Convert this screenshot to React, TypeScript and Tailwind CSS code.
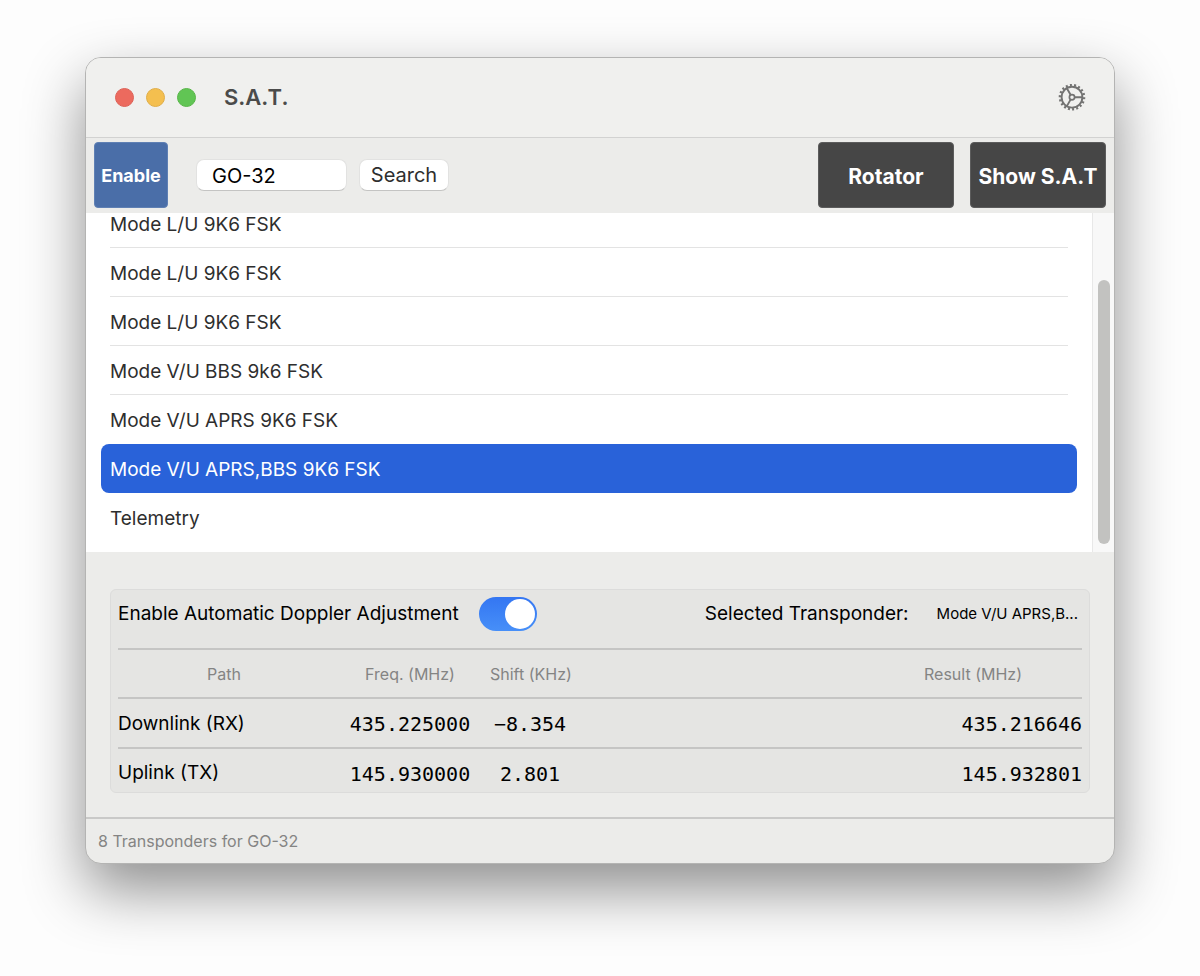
import { useState } from "react";

const transponders = [
  "Mode L/U 9K6 FSK",
  "Mode L/U 9K6 FSK",
  "Mode L/U 9K6 FSK",
  "Mode V/U BBS 9k6 FSK",
  "Mode V/U APRS 9K6 FSK",
  "Mode V/U APRS,BBS 9K6 FSK",
  "Telemetry",
];

const paths = [
  { name: "Downlink (RX)", freq: "435.225000", shift: "−8.354", result: "435.216646" },
  { name: "Uplink (TX)", freq: "145.930000", shift: "2.801", result: "145.932801" },
];

function GearIcon() {
  return (
    <svg viewBox="0 0 28 28" className="h-7 w-7" fill="none" stroke="#737372">
      <circle cx="14" cy="13.2" r="10.4" strokeWidth="1.9" />
      <circle cx="14" cy="13.2" r="12.1" strokeWidth="2.4" pathLength="72" strokeDasharray="1.9 2.1" />
      <circle cx="14" cy="13.2" r="2.6" strokeWidth="1.7" />
      <path d="M16.6 13.2H24M12.7 11L9 4.5M12.7 15.4L9 21.9" strokeWidth="1.9" />
    </svg>
  );
}

function TitleBar() {
  return (
    <header className="flex h-20 items-center border-b border-[#d2d2d1] bg-[#f0f0ee] pr-7 pl-[29px]">
      <div className="flex gap-3">
        <button aria-label="Close" className="h-[19px] w-[19px] rounded-full border border-[#dd6257] bg-[#ec6a5e]" />
        <button aria-label="Minimize" className="h-[19px] w-[19px] rounded-full border border-[#e0ae48] bg-[#f4bf4f]" />
        <button aria-label="Zoom" className="h-[19px] w-[19px] rounded-full border border-[#58b648] bg-[#61c554]" />
      </div>
      <h1 className="ml-7 flex-1 text-[22px] font-semibold text-[#4b4b4a]">S.A.T.</h1>
      <button aria-label="Settings">
        <GearIcon />
      </button>
    </header>
  );
}

function Toolbar() {
  return (
    <div className="flex items-center px-2 pt-1 pb-[5px]">
      <button className="h-[66px] w-[74px] rounded-sm border border-[#5f80b4] bg-[#4a6ea8] text-[18px] font-bold text-white">
        Enable
      </button>
      <input
        aria-label="Satellite"
        defaultValue="GO-32"
        className="ml-7 h-8 w-[151px] rounded-lg border border-[#e2e2e1] border-b-[#c4c4c3] bg-white px-[15px] pt-[2px] text-[20px] text-black outline-none"
      />
      <button className="ml-3 h-8 w-[90px] rounded-lg border border-[#e2e2e1] border-b-[#c4c4c3] bg-white text-[20px] leading-7 text-[#2e2e2e]">
        Search
      </button>
      <div className="ml-auto flex gap-4">
        <button className="h-[66px] w-[136px] rounded-sm border border-[#5c5c5c] bg-[#464646] pt-1 text-[21px] font-bold whitespace-nowrap text-white">
          Rotator
        </button>
        <button className="h-[66px] w-[136px] rounded-sm border border-[#5c5c5c] bg-[#464646] pt-1 text-[21px] font-bold whitespace-nowrap text-white">
          Show S.A.T
        </button>
      </div>
    </div>
  );
}

function TransponderList({ selected, onSelect }: { selected: number; onSelect: (i: number) => void }) {
  return (
    <div className="flex h-[339px] bg-white">
      <ul className="flex flex-1 flex-col justify-end overflow-hidden px-[15px] pb-[10px]">
        {transponders.map((name, i) => {
          const active = i === selected;
          const line = !active && i + 1 !== selected && i !== transponders.length - 1;
          return (
            <li key={i} className={`h-[49px] shrink-0 rounded-lg px-[9px] ${active ? "bg-[#2962d9] text-white" : "text-[#2e2e2e]"}`}>
              <button
                onClick={() => onSelect(i)}
                className={`h-full w-full border-b pt-1 text-left text-[19px] ${line ? "border-[#e3e3e3]" : "border-transparent"}`}
              >
                {name}
              </button>
            </li>
          );
        })}
      </ul>
      <div className="w-[22px] border-l border-[#e8e8e8] bg-[#f8f8f8] pt-[67px] pl-[5px]">
        <div className="h-[264px] w-3 rounded-full bg-[#c2c2c0]" />
      </div>
    </div>
  );
}

function DopplerPanel() {
  const [auto, setAuto] = useState(true);
  return (
    <section className="mx-6 mt-[37px] mb-6 rounded-md border border-[#dcdcdb] bg-[#e5e5e3] px-[7px] text-black">
      <div className="flex h-[58px] items-center pb-[10px] text-[19px]">
        <label htmlFor="doppler">Enable Automatic Doppler Adjustment</label>
        <input
          id="doppler"
          type="checkbox"
          role="switch"
          checked={auto}
          onChange={(e) => setAuto(e.target.checked)}
          className="ml-5 h-[34px] w-[58px] appearance-none rounded-full bg-[#c8c8c8] p-[2px] before:block before:h-[30px] before:w-[30px] before:rounded-full before:bg-white checked:bg-linear-to-b checked:from-[#3476f2] checked:to-[#478ff8] checked:before:ml-6"
        />
        <span className="ml-auto">Selected Transponder:</span>
        <span className="mr-1 ml-7 text-[15px]">Mode V/U APRS,B...</span>
      </div>
      <table className="w-full table-fixed border-collapse">
        <thead>
          <tr className="h-[49px] border-t-2 border-[#c5c5c4] text-[16px] text-[#848483]">
            <th className="w-[212px] font-normal">Path</th>
            <th className="w-[160px] font-normal">Freq. (MHz)</th>
            <th className="w-[80px] font-normal whitespace-nowrap">Shift (KHz)</th>
            <th className="pr-[60px] text-right font-normal">Result (MHz)</th>
          </tr>
        </thead>
        <tbody>
          {paths.map((p) => (
            <tr key={p.name} className="h-[50px] border-t-2 border-[#c5c5c4] font-['DejaVu_Sans_Mono',monospace] text-[20px] *:pt-[2px] last:h-11 last:*:pt-[6px]">
              <td className="font-[Inter,sans-serif] text-[19px]">{p.name}</td>
              <td className="text-center">{p.freq}</td>
              <td className="text-center">{p.shift}</td>
              <td className="text-right">{p.result}</td>
            </tr>
          ))}
        </tbody>
      </table>
    </section>
  );
}

export default function App() {
  const [selected, setSelected] = useState(5);
  return (
    <div className="min-h-screen bg-[#fdfdfd] px-[85px] pt-[57px] pb-28 font-[Inter,sans-serif]">
      <main className="overflow-hidden rounded-2xl border border-[#b4b4b3] bg-[#ececea] shadow-[0_26px_60px_rgba(0,0,0,0.44)]">
        <TitleBar />
        <Toolbar />
        <TransponderList selected={selected} onSelect={setSelected} />
        <DopplerPanel />
        <footer className="border-t-2 border-[#c9c9c8] px-3 py-[10px] text-[16px] leading-6 text-[#848483]">
          8 Transponders for GO-32
        </footer>
      </main>
    </div>
  );
}
